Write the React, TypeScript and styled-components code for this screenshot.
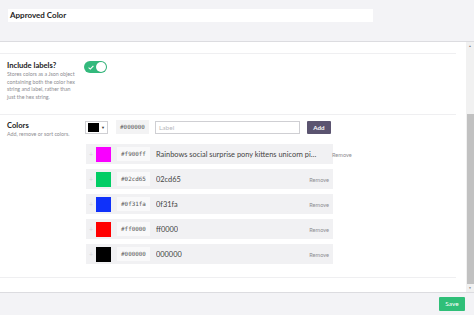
import styled, { createGlobalStyle } from 'styled-components';

const GlobalStyle = createGlobalStyle`
	html, body {
		margin: 0;
		padding: 0;
		background: #ffffff;
		font-family: Lato, 'Open Sans', Arial, sans-serif;
		color: #2b2b2b;
	}
`;

// ── Layout ────────────────────────────────────────────────────────────────────

const Page = styled.div`
	width: 474px;
	height: 315px;
	display: flex;
	flex-direction: column;
	overflow: hidden;
`;

const Header = styled.div`
	height: 42px;
	box-sizing: border-box;
	padding: 9px 8px 0;
	background: #f3f3f6;
	border-bottom: 1px solid #dcdce0;
`;

const TitleInput = styled.div`
	width: 365px;
	height: 13px;
	background: #ffffff;
	font-size: 8px;
	font-weight: 700;
	line-height: 13px;
	padding-left: 2px;
	box-sizing: border-box;
	color: #1e1e1e;
`;

const Body = styled.div`
	flex: 1;
	display: flex;
	min-height: 0;
`;

const Content = styled.div`
	flex: 1;
	padding: 11px 10px 0 0;
	overflow: hidden;
`;

const Section = styled.section<{ $pad: number; $gap?: number }>`
	display: flex;
	border-top: 1px solid #efeff1;
	padding: ${({ $pad }) => $pad}px 0 0 7px;
	margin-top: ${({ $gap }) => $gap ?? 0}px;
`;

const SectionEnd = styled.div`
	border-top: 1px solid #efeff1;
	margin-top: 13px;
`;

const Info = styled.div`
	width: 78px;
	flex-shrink: 0;
`;

const InfoTitle = styled.div`
	font-size: 7.6px;
	font-weight: 700;
	line-height: 10px;
	color: #222;
`;

const InfoDesc = styled.div`
	font-size: 5.3px;
	line-height: 7.5px;
	color: #8d8d92;
	margin-top: 1px;
`;

// ── Toggle ────────────────────────────────────────────────────────────────────

const Toggle = styled.div`
	width: 23px;
	height: 12px;
	border-radius: 6px;
	background: #33b97c;
	display: flex;
	align-items: center;
	justify-content: space-between;
	padding: 0 1px 0 4px;
	box-sizing: border-box;
	margin: 1px 0 0 -1px;
`;

const Knob = styled.div`
	width: 10px;
	height: 10px;
	border-radius: 50%;
	background: #ffffff;
	box-shadow: 0 0 1px rgba(0, 0, 0, 0.2);
`;

// ── Colors ────────────────────────────────────────────────────────────────────

const Colors = styled.div`
	display: flex;
	flex-direction: column;
	gap: 5px;
`;

const AddRow = styled.div`
	display: flex;
	align-items: center;
	margin-bottom: 5px;
`;

const PickerButton = styled.div`
	width: 23px;
	height: 13px;
	box-sizing: border-box;
	border: 1px solid #cfcfd3;
	display: flex;
	align-items: center;
	padding: 0 0 0 2px;
	gap: 2px;
	background: #fff;
`;

const PickerSwatch = styled.div`
	width: 11px;
	height: 9px;
	background: #000;
`;

const Caret = styled.span`
	font-size: 4px;
	color: #333;
`;

const Hex = styled.div<{ $tone: 'plain' | 'row' }>`
	width: 33px;
	height: 14px;
	line-height: 14px;
	text-align: center;
	font-family: 'DejaVu Sans Mono', 'Liberation Mono', monospace;
	font-size: 5.9px;
	color: #555;
	background: ${({ $tone }) => ($tone === 'row' ? '#f9f9fa' : '#f3f3f4')};
	flex-shrink: 0;
`;

const LabelInput = styled.div`
	width: 145px;
	height: 13px;
	box-sizing: border-box;
	border: 1px solid #cfcfd3;
	margin-left: 6px;
	font-size: 6.5px;
	line-height: 11px;
	padding-left: 3px;
	color: #b8b8bc;
`;

const AddButton = styled.div`
	width: 24px;
	height: 13px;
	line-height: 13px;
	margin-left: 7px;
	background: #5b5470;
	color: #fff;
	font-size: 6.2px;
	font-weight: 700;
	text-align: center;
	border-radius: 1px;
`;

const Row = styled.div`
	width: 247px;
	height: 20px;
	margin-left: 1px;
	background: #f1f1f3;
	display: flex;
	align-items: center;
`;

const Handle = styled.span`
	width: 10px;
	text-align: center;
	font-size: 7px;
	color: #d6d6da;
	flex-shrink: 0;
`;

const Swatch = styled.div<{ $color: string }>`
	width: 15px;
	height: 15px;
	background: ${({ $color }) => $color};
	flex-shrink: 0;
	margin-right: 6px;
`;

const RowLabel = styled.div`
	max-width: 164px;
	margin-left: 6px;
	flex-shrink: 0;
	font-size: 7.4px;
	color: #444;
	white-space: nowrap;
	overflow: hidden;
	text-overflow: ellipsis;
`;

const Remove = styled.span`
	margin-left: auto;
	padding: 0 4px 0 12px;
	font-size: 5.6px;
	color: #8d8d92;
	flex-shrink: 0;
`;

// ── Scrollbar / footer ────────────────────────────────────────────────────────

const Scrollbar = styled.div`
	width: 8px;
	background: #f1f1f1;
	display: flex;
	flex-direction: column;
	align-items: center;
	font-size: 3px;
	color: #777;
`;

const Arrow = styled.span`
	height: 8px;
	line-height: 8px;
`;

const Thumb = styled.div`
	width: 7px;
	margin-top: 64px;
	flex: 1;
	background: #c1c1c1;
`;

const Footer = styled.div`
	height: 23px;
	box-sizing: border-box;
	border-top: 1px solid #dcdce0;
	background: #f3f3f6;
	display: flex;
	justify-content: flex-end;
	align-items: center;
	padding-right: 9px;
`;

const SaveButton = styled.div`
	width: 26px;
	height: 14px;
	line-height: 14px;
	background: #2fbf78;
	color: #fff;
	font-size: 6.5px;
	text-align: center;
	border-radius: 1px;
`;

const colors = [
	{ hex: '#f900ff', label: 'Rainbows social surprise pony kittens unicorn pinkie pie' },
	{ hex: '#02cd65', label: '02cd65' },
	{ hex: '#0f31fa', label: '0f31fa' },
	{ hex: '#ff0000', label: 'ff0000' },
	{ hex: '#000000', label: '000000' },
];

export default function App() {
	return (
		<Page>
			<GlobalStyle />
			<Header>
				<TitleInput>Approved Color</TitleInput>
			</Header>

			<Body>
				<Content>
					<Section $pad={6}>
						<Info>
							<InfoTitle>Include labels?</InfoTitle>
							<InfoDesc>
								Stores colors as a Json object
								<br />
								containing both the color hex
								<br />
								string and label, rather than
								<br />
								just the hex string.
							</InfoDesc>
						</Info>
						<Toggle>
							<svg width="6" height="5" viewBox="0 0 6 5">
								<path d="M0.6 2.6 L2.3 4.1 L5.4 0.8" stroke="#fff" strokeWidth="1.1" fill="none" />
							</svg>
							<Knob />
						</Toggle>
					</Section>

					<Section $pad={5} $gap={13}>
						<Info>
							<InfoTitle>Colors</InfoTitle>
							<InfoDesc>Add, remove or sort colors.</InfoDesc>
						</Info>
						<Colors>
							<AddRow>
								<PickerButton>
									<PickerSwatch />
									<Caret>▼</Caret>
								</PickerButton>
								<Hex $tone="plain" style={{ marginLeft: 8 }}>#000000</Hex>
								<LabelInput>Label</LabelInput>
								<AddButton>Add</AddButton>
							</AddRow>
							{colors.map((c) => (
								<Row key={c.hex}>
									<Handle>+</Handle>
									<Swatch $color={c.hex} />
									<Hex $tone="row">{c.hex}</Hex>
									<RowLabel>{c.label}</RowLabel>
									<Remove>Remove</Remove>
								</Row>
							))}
						</Colors>
					</Section>
					<SectionEnd />
				</Content>
				<Scrollbar>
					<Arrow>▲</Arrow>
					<Thumb />
					<Arrow>▼</Arrow>
				</Scrollbar>
			</Body>

			<Footer>
				<SaveButton>Save</SaveButton>
			</Footer>
		</Page>
	);
}
